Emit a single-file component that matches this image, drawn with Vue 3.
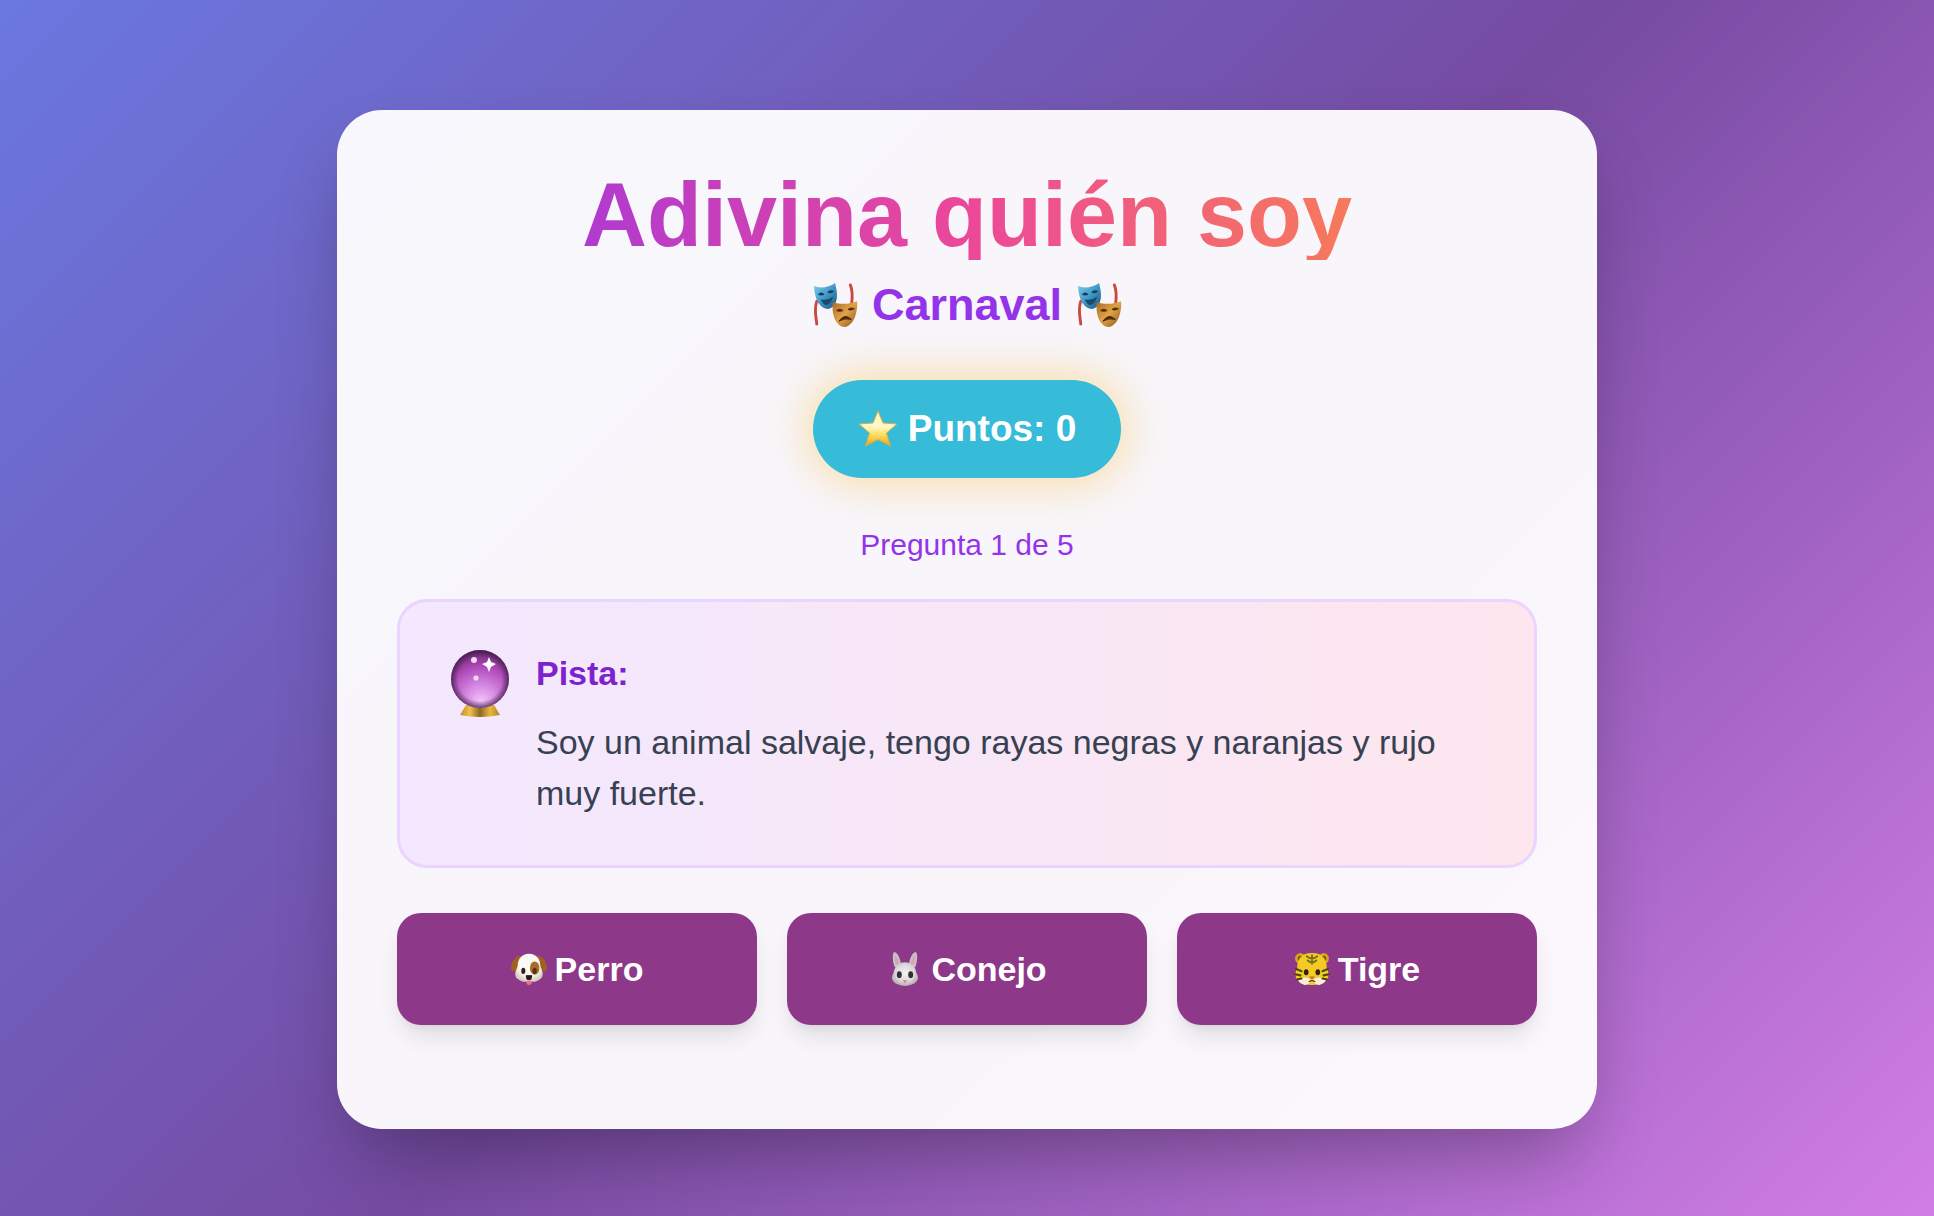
<script setup>
import { ref } from 'vue'

const points = ref(0)
const current = ref(0)
const total = 5

const question = {
  clue: 'Soy un animal salvaje, tengo rayas negras y naranjas y rujo muy fuerte.',
  answer: 'Tigre',
  options: [
    { name: 'Perro', icon: 'dog' },
    { name: 'Conejo', icon: 'rabbit' },
    { name: 'Tigre', icon: 'tiger' }
  ]
}

function choose(option) {
  if (option.name === question.answer) {
    points.value += 10
  }
}
</script>

<template>
  <div class="page">
    <!-- Shared shapes -->
    <svg class="defs" aria-hidden="true">
      <defs>
        <linearGradient id="maskBlue" x1="0" y1="0" x2="1" y2="1">
          <stop offset="0" stop-color="#7fd0ee" />
          <stop offset="0.5" stop-color="#4199c8" />
          <stop offset="1" stop-color="#1d5478" />
        </linearGradient>
        <linearGradient id="maskGold" x1="0" y1="0" x2="1" y2="1">
          <stop offset="0" stop-color="#a96a22" />
          <stop offset="0.5" stop-color="#e0a348" />
          <stop offset="1" stop-color="#8a5016" />
        </linearGradient>
        <symbol id="masks" viewBox="0 0 48 48">
          <path d="M5 20C2 28 4 35 5 44" fill="none" stroke="#c94a3c" stroke-width="3" stroke-linecap="round" />
          <path d="M40 3C44 13 41 20 41 28" fill="none" stroke="#c94a3c" stroke-width="3" stroke-linecap="round" />
          <path d="M2 4C7 7 18 6 24 1C27 12 28 24 18 28C9 29 3 20 2 4Z" fill="url(#maskBlue)" />
          <path d="M6 13q4-4 7 0q-3 2-7 0zM16 11q3-4 7-1q-3 3-7 1z" fill="#163e5c" />
          <path d="M9 18Q16 20 22 15Q20 24 14 24Q11 23 9 18Z" fill="#174c70" />
          <path d="M22 21C31 24 38 23 47 20C48 31 44 45 34 47C24 46 20 32 22 21Z" fill="url(#maskGold)" />
          <path d="M25 30q4-4 8 0q-4 2-8 0zM37 29q3-4 8-1q-4 3-8 1z" fill="#583008" />
          <path d="M28 41Q34 32 41 39Q34 37 28 41Z" fill="#4f2906" stroke="#4f2906" />
        </symbol>

        <linearGradient id="starFill" x1="0" y1="0" x2="0" y2="1">
          <stop offset="0" stop-color="#fff6c0" />
          <stop offset="0.45" stop-color="#fff8c4" />
          <stop offset="0.7" stop-color="#fadb5c" />
          <stop offset="1" stop-color="#eda30c" />
        </linearGradient>
        <symbol id="star" viewBox="0 0 40 40">
          <path d="M20 2L25 14L39 15L28.5 24L32.5 37L20 30.5L7.5 37L11.5 24L1 15L15 14Z" fill="url(#starFill)"
            stroke="#d5ae50" stroke-width="1" stroke-linejoin="round" />
        </symbol>

        <radialGradient id="ballFill" cx="0.52" cy="0.88" r="0.9">
          <stop offset="0" stop-color="#f3c4f7" />
          <stop offset="0.3" stop-color="#d68ae2" />
          <stop offset="0.65" stop-color="#b04bbb" />
          <stop offset="0.9" stop-color="#7a2f80" />
          <stop offset="1" stop-color="#48254f" />
        </radialGradient>
        <radialGradient id="ballEdge">
          <stop offset="0.75" stop-color="#3e1d48" stop-opacity="0" />
          <stop offset="1" stop-color="#3e1d48" stop-opacity="0.75" />
        </radialGradient>
        <linearGradient id="standFill" x1="0" y1="0" x2="1" y2="0">
          <stop offset="0" stop-color="#c28a2c" />
          <stop offset="0.25" stop-color="#f0c24a" />
          <stop offset="0.5" stop-color="#8f6424" />
          <stop offset="0.75" stop-color="#e8b83f" />
          <stop offset="1" stop-color="#b5802a" />
        </linearGradient>
        <symbol id="crystal" viewBox="0 0 60 68">
          <path d="M16 55H44L50 65Q30 69 10 65Z" fill="url(#standFill)" />
          <circle cx="30" cy="29" r="29" fill="url(#ballFill)" />
          <circle cx="30" cy="29" r="29" fill="url(#ballEdge)" />
          <path d="M39 7L41 12L46 14L41 17L39 22L37 17L32 14L37 12Z" fill="#fff" />
          <circle cx="24" cy="10" r="3" fill="#fbd5f5" />
          <circle cx="26" cy="28" r="2.6" fill="#fbd5f5" />
        </symbol>

        <radialGradient id="dogFace" cx="0.5" cy="0.4" r="0.6">
          <stop offset="0.6" stop-color="#fcfaf6" />
          <stop offset="1" stop-color="#d5cdc4" />
        </radialGradient>
        <symbol id="dog" viewBox="0 0 38 34">
          <path d="M10 3C3 3 0 12 0 17C2 22 8 19 9 14ZM28 3C35 3 38 12 38 17C36 22 30 19 29 14Z" fill="#a2601f" />
          <path d="M16 27H22V30Q22 34 19 34Q16 34 16 30Z" fill="#ef7187" />
          <path d="M19 1C28 1 31 8 31 14C34 21 35 25 30 28C26 31 22 31 19 29C16 31 12 31 8 28C3 25 4 21 7 14C7 8 10 1 19 1Z"
            fill="url(#dogFace)" />
          <ellipse cx="25" cy="16" rx="5" ry="7" fill="#a96b28" />
          <ellipse cx="13" cy="19" rx="2.2" ry="3.2" fill="#33231c" />
          <ellipse cx="25" cy="19" rx="2.2" ry="3.2" fill="#5b3414" />
          <path d="M16 24H22L21 28H17Z" fill="#271b18" stroke="#271b18" stroke-linejoin="round" />
        </symbol>

        <radialGradient id="rabbitFace" cx="0.5" cy="0.45" r="0.6">
          <stop offset="0" stop-color="#f5f2f3" />
          <stop offset="0.6" stop-color="#dcd7da" />
          <stop offset="1" stop-color="#aaa3a8" />
        </radialGradient>
        <symbol id="rabbit" viewBox="0 0 32 38">
          <path d="M5 17C2 8 3 1 5 1C9 2 12 10 12 17ZM27 17C30 8 29 1 27 1C23 2 20 10 20 17Z" fill="#c6bfc5" />
          <path d="M7 14Q4 7 6 5Q9 9 10 14ZM25 14Q28 7 26 5Q23 9 22 14Z" fill="#e0a0b2" />
          <path d="M16 12C25 12 27 18 28 23C33 31 27 36 16 37C5 36-1 31 4 23C5 18 7 12 16 12Z" fill="url(#rabbitFace)" />
          <ellipse cx="10" cy="25" rx="2.6" ry="3.6" fill="#333034" />
          <ellipse cx="22" cy="25" rx="2.6" ry="3.6" fill="#333034" />
          <path d="M13.5 31H18.5L16 34Z" fill="#d87f8c" />
        </symbol>

        <symbol id="tiger" viewBox="0 0 34 34">
          <circle cx="6" cy="7" r="5" fill="#d9a51b" />
          <circle cx="28" cy="7" r="5" fill="#d9a51b" />
          <circle cx="6" cy="7" r="2.5" fill="#7d5a1a" />
          <circle cx="28" cy="7" r="2.5" fill="#7d5a1a" />
          <path d="M17 2C27 2 31 8 31 16C35 24 32 32 17 32C2 32-1 24 3 16C3 8 7 2 17 2Z" fill="#f4ca25" />
          <path d="M4 27Q10 23 16 27Q15 32 10 32Q5 31 4 27ZM30 27Q24 23 18 27Q19 32 24 32Q29 31 30 27Z" fill="#f7f0d9" />
          <path d="M12 5Q17 9 22 5M13 9Q17 13 21 9M17 4V12" fill="none" stroke="#77701c" stroke-width="1.8"
            stroke-linecap="round" />
          <path d="M2 17L7 19M1 22L6 23M3 27L7 26M32 17L27 19M33 22L28 23M31 27L27 26" fill="none" stroke="#51430f"
            stroke-width="2" stroke-linecap="round" />
          <ellipse cx="11.5" cy="20" rx="2.2" ry="2.8" fill="#30230d" />
          <ellipse cx="22.5" cy="20" rx="2.2" ry="2.8" fill="#30230d" />
          <path d="M14 24H20L17 27Z" fill="#bd654b" />
          <path d="M14 29Q17 27 20 29" fill="none" stroke="#5e3e22" stroke-width="1.2" />
        </symbol>
      </defs>
    </svg>

    <main class="card">
      <!-- Header -->
      <h1 class="title">Adivina quién soy</h1>
      <h2 class="subtitle">
        <svg class="icon-masks" aria-hidden="true"><use href="#masks" /></svg>
        <span>Carnaval</span>
        <svg class="icon-masks" aria-hidden="true"><use href="#masks" /></svg>
      </h2>

      <!-- Score -->
      <div class="score">
        <svg class="icon-star" aria-hidden="true"><use href="#star" /></svg>
        <span>Puntos: {{ points }}</span>
      </div>
      <p class="progress">Pregunta {{ current + 1 }} de {{ total }}</p>

      <!-- Clue -->
      <section class="clue">
        <svg class="icon-crystal" aria-hidden="true"><use href="#crystal" /></svg>
        <div class="clue-content">
          <h3 class="clue-title">Pista:</h3>
          <p class="clue-text">{{ question.clue }}</p>
        </div>
      </section>

      <!-- Options -->
      <div class="options">
        <button v-for="option in question.options" :key="option.name" type="button" class="option"
          @click="choose(option)">
          <svg class="icon-animal" aria-hidden="true"><use :href="'#' + option.icon" /></svg>
          <span>{{ option.name }}</span>
        </button>
      </div>
    </main>
  </div>
</template>

<style>
body {
  margin: 0;
}
</style>

<style scoped>
.page {
  box-sizing: border-box;
  min-height: 100vh;
  padding: 110px 24px;
  display: flex;
  align-items: center;
  justify-content: center;
  background: linear-gradient(135deg, #6a78e0 0%, #764ba2 51%, #d37fe8 100%);
  font-family: "Liberation Sans", Arial, sans-serif;
}

.defs {
  position: absolute;
  width: 0;
  height: 0;
}

.card {
  box-sizing: border-box;
  width: 100%;
  max-width: 1260px;
  padding: 60px 60px 104px;
  display: flex;
  flex-direction: column;
  align-items: center;
  background: rgba(255, 255, 255, 0.95);
  border-radius: 45px;
  box-shadow: 0 38px 76px -18px rgba(0, 0, 0, 0.32);
}

.title {
  margin: 0;
  font-size: 90px;
  line-height: 90px;
  text-align: center;
  color: transparent;
  background: linear-gradient(90deg, #9333ea, #ec4899, #fb923c);
  background-clip: text;
  align-self: stretch;
}

.subtitle {
  margin: 18px 0 0;
  display: flex;
  align-items: center;
  gap: 14px;
  font-size: 45px;
  line-height: 54px;
  color: #9333ea;
}

.icon-masks {
  width: 46px;
  height: 46px;
}

.score {
  margin-top: 48px;
  padding: 24px 45px;
  display: flex;
  align-items: center;
  gap: 10px;
  font-size: 37px;
  font-weight: bold;
  line-height: 50px;
  color: #fff;
  background: #36bbd8;
  border-radius: 50px;
  box-shadow: 0 0 45px 4px rgba(251, 184, 50, 0.45);
}

.icon-star {
  width: 40px;
  height: 40px;
}

.progress {
  margin: 44px 0 0;
  font-size: 30px;
  line-height: 45px;
  color: #9333ea;
}

.clue {
  box-sizing: border-box;
  width: 100%;
  margin-top: 32px;
  padding: 46px 50px;
  display: flex;
  align-items: flex-start;
  gap: 26px;
  background: linear-gradient(90deg, #f3e8ff, #fde6ee);
  border: 3px solid #e9d5ff;
  border-radius: 30px;
}

.icon-crystal {
  flex-shrink: 0;
  width: 60px;
  height: 68px;
  margin-top: 2px;
}

.clue-title {
  margin: 0 0 18px;
  font-size: 34px;
  line-height: 51px;
  color: #7e22ce;
}

.clue-text {
  margin: 0;
  font-size: 34px;
  line-height: 51px;
  color: #374151;
}

.options {
  width: 100%;
  margin-top: 45px;
  display: grid;
  grid-template-columns: repeat(3, 1fr);
  gap: 30px;
}

.option {
  padding: 30px;
  display: flex;
  align-items: center;
  justify-content: center;
  gap: 8px;
  font-family: inherit;
  font-size: 34px;
  font-weight: bold;
  line-height: 52px;
  color: #fff;
  background: #8e3889;
  border: none;
  border-radius: 24px;
  box-shadow: 0 15px 24px -4px rgba(0, 0, 0, 0.1), 0 6px 10px -6px rgba(0, 0, 0, 0.1);
  cursor: pointer;
}

.option:hover {
  background: #7d2f79;
}

.icon-animal {
  width: 36px;
  height: 36px;
}

@media (max-width: 900px) {
  .options {
    grid-template-columns: 1fr;
  }
}
</style>
